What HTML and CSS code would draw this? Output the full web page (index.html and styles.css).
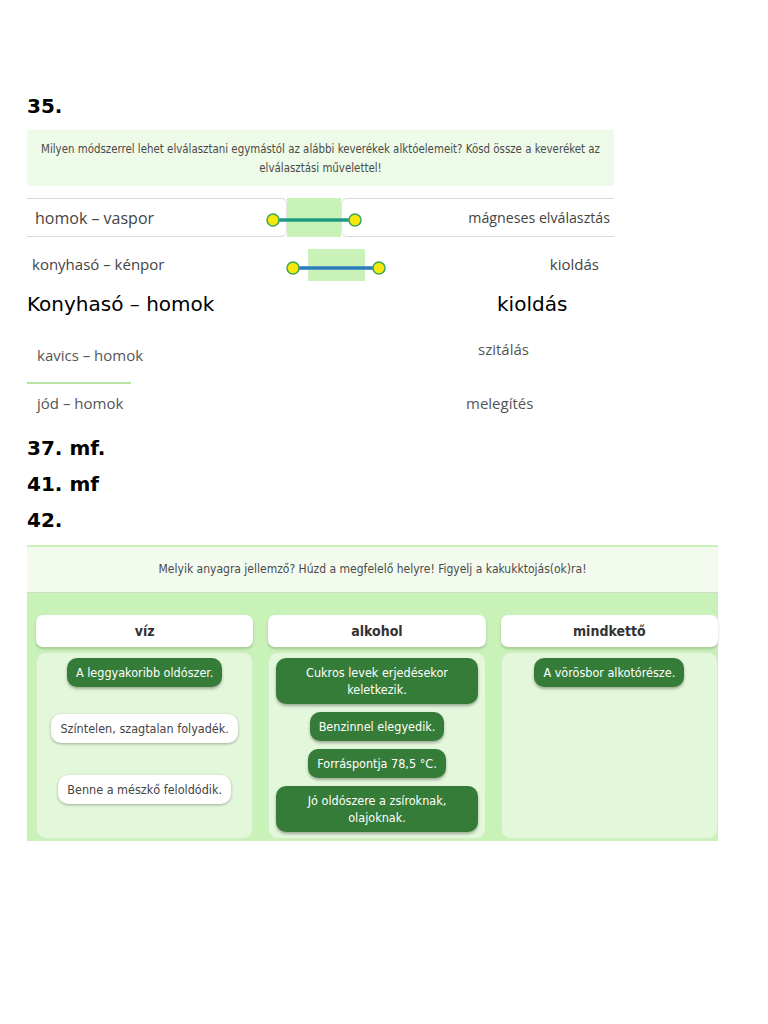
FILE: index.html
```html
<!DOCTYPE html>
<html lang="hu">
<head>
  <meta charset="UTF-8" />
  <meta name="viewport" content="width=device-width, initial-scale=1" />
  <title>Feladatok</title>
  <link rel="stylesheet" href="styles.css">
</head>
<body>
  <div class="page">
    <h2 class="num num-first">35.</h2>

    <div class="match">
      <div class="prompt">Milyen módszerrel lehet elválasztani egymástól az alábbi keverékek alktóelemeit? Kösd össze a keveréket az elválasztási művelettel!</div>

      <div class="pair pair-one">
        <div class="card card-left">homok – vaspor</div>
        <div class="slot"></div>
        <div class="card card-right">mágneses elválasztás</div>
      </div>

      <div class="pair pair-two">
        <div class="pair-label">konyhasó – kénpor</div>
        <div class="slot slot-low"></div>
        <div class="pair-label pair-end">kioldás</div>
      </div>

      <svg class="wires" width="587" height="160" viewBox="0 0 587 160">
        <line x1="246" y1="90" x2="328" y2="90" stroke="#1f9a82" stroke-width="3.5" />
        <circle cx="246" cy="90" r="6" fill="#f6e80c" stroke="#3aa85c" stroke-width="1.5" />
        <circle cx="328" cy="90" r="6" fill="#f6e80c" stroke="#3aa85c" stroke-width="1.5" />
        <line x1="266" y1="138" x2="352" y2="138" stroke="#2b7cbd" stroke-width="3.5" />
        <circle cx="266" cy="138" r="6" fill="#f6e80c" stroke="#3aa85c" stroke-width="1.5" />
        <circle cx="352" cy="138" r="6" fill="#f6e80c" stroke="#3aa85c" stroke-width="1.5" />
      </svg>
    </div>

    <div class="typed">
      <span class="typed-left">Konyhasó – homok</span>
      <span>kioldás</span>
    </div>

    <div class="scrap">
      <div class="scrap-row">
        <span class="scrap-left">kavics – homok</span>
        <span class="scrap-right up">szitálás</span>
      </div>
      <div class="scrap-rule"></div>
      <div class="scrap-row">
        <span class="scrap-left">jód – homok</span>
        <span class="scrap-right back">melegítés</span>
      </div>
    </div>

    <h2 class="num num-gap">37. mf.</h2>
    <h2 class="num">41. mf</h2>
    <h2 class="num">42.</h2>

    <div class="sort">
      <div class="sort-prompt">Melyik anyagra jellemző? Húzd a megfelelő helyre! Figyelj a kakukktojás(ok)ra!</div>
      <div class="sort-board">
        <div class="bin">
          <div class="bin-head">víz</div>
          <div class="bin-body bin-spread">
            <span class="chip">A leggyakoribb oldószer.</span>
            <span class="chip chip-white">Színtelen, szagtalan folyadék.</span>
            <span class="chip chip-white chip-drop">Benne a mészkő feloldódik.</span>
          </div>
        </div>
        <div class="bin">
          <div class="bin-head">alkohol</div>
          <div class="bin-body">
            <span class="chip">Cukros levek erjedésekor keletkezik.</span>
            <span class="chip">Benzinnel elegyedik.</span>
            <span class="chip">Forráspontja 78,5 °C.</span>
            <span class="chip">Jó oldószere a zsíroknak, olajoknak.</span>
          </div>
        </div>
        <div class="bin">
          <div class="bin-head">mindkettő</div>
          <div class="bin-body">
            <span class="chip">A vörösbor alkotórésze.</span>
          </div>
        </div>
      </div>
    </div>
  </div>
</body>
</html>
```

FILE: styles.css
```css
body {
  margin: 0;
  background: #fff;
  font-family: 'DejaVu Sans', sans-serif;
  color: #000;
}
.page {
  padding: 88px 0 0 27px;
}
.num {
  margin: 0;
  font-size: 20px;
  line-height: 36px;
  font-weight: bold;
}
.num-first {
  margin-bottom: 6px;
}
.num-gap {
  margin-top: 15px;
}

/* matching task screenshot */
.match {
  position: relative;
  width: 587px;
  font-family: 'Open Sans', sans-serif;
  color: #444;
}
.prompt {
  height: 56px;
  box-sizing: border-box;
  padding: 10px 2px 0;
  background: #effbe9;
  text-align: center;
  font-family: 'DejaVu Sans Condensed', 'Liberation Sans Narrow', 'Open Sans', sans-serif;
  font-stretch: condensed;
  font-size: 11.4px;
  line-height: 19px;
  color: #4a4a4a;
}
.pair {
  display: flex;
}
.pair-one {
  margin-top: 12px;
  height: 39px;
}
.card {
  flex: 1;
  display: flex;
  align-items: center;
  box-sizing: border-box;
  border-top: 1px solid #d9d9d9;
  border-bottom: 1px solid #d9d9d9;
  background: #fff;
}
.card-left {
  flex: 0 0 260px;
  padding-left: 8px;
  font-size: 16px;
  border-right: 1px solid #e4e4e4;
  border-radius: 0 6px 6px 0;
}
.card-right {
  justify-content: flex-end;
  padding-right: 4px;
  font-size: 14.2px;
  border-left: 1px solid #e4e4e4;
  border-radius: 6px 0 0 6px;
}
.slot {
  flex: 0 0 54px;
  background: #c9f2b8;
}
.pair-two {
  height: 48px;
  font-size: 15px;
}
.pair-label {
  flex: 0 0 281px;
  box-sizing: border-box;
  padding: 17px 0 0 5px;
}
.pair-end {
  flex: 1;
  text-align: right;
  padding: 17px 15px 0 0;
}
.slot-low {
  flex: 0 0 57px;
  height: 32px;
  margin-top: 12px;
}
.wires {
  position: absolute;
  left: 0;
  top: 0;
}

.typed {
  display: flex;
  font-size: 20px;
  line-height: 26px;
  margin-top: 6px;
}
.typed-left {
  width: 470px;
}

.scrap {
  font-family: 'Open Sans', sans-serif;
  font-size: 15px;
  color: #555;
  margin-top: 26px;
  width: 587px;
}
.scrap-row {
  display: flex;
  height: 24px;
  line-height: 24px;
}
.scrap-left {
  width: 439px;
  padding-left: 10px;
}
.up {
  position: relative;
  top: -6px;
  padding-left: 2px;
}
.scrap-rule {
  width: 104px;
  height: 2px;
  background: #b9e4a8;
  margin: 15px 0 7px;
}
.back {
  margin-left: -10px;
}

/* sorting task screenshot */
.sort {
  width: 691px;
  margin-top: 7px;
  font-family: 'DejaVu Sans Condensed', 'Liberation Sans Narrow', 'Open Sans', sans-serif;
  font-stretch: condensed;
  border-top: 2px solid #c9f2b8;
}
.sort-prompt {
  height: 46px;
  box-sizing: border-box;
  padding-top: 15px;
  background: #f3fbef;
  border-bottom: 1px solid #cfdcc8;
  text-align: center;
  font-size: 12px;
  color: #4a4a4a;
}
.sort-board {
  display: grid;
  grid-template-columns: repeat(3, 1fr);
  gap: 15px;
  padding: 22px 0 2px 9px;
  background: #c9f2b8;
}
.bin {
  display: flex;
  flex-direction: column;
  gap: 5px;
}
.bin-head {
  height: 32px;
  line-height: 32px;
  text-align: center;
  background: #fff;
  border-radius: 7px;
  box-shadow: 0 2px 3px rgba(0, 0, 0, 0.18);
  font-size: 14px;
  font-weight: bold;
  color: #333;
}
.bin-body {
  height: 187px;
  box-sizing: border-box;
  padding: 5px 7px;
  display: flex;
  flex-direction: column;
  align-items: center;
  gap: 8px;
  background: #e3f7da;
  border: 1px solid #d3ecc8;
  border-radius: 10px;
}
.bin-spread {
  gap: 27px;
}
.chip {
  max-width: 204px;
  box-sizing: border-box;
  padding: 6px 9px;
  text-align: center;
  font-size: 12.5px;
  line-height: 17px;
  color: #fff;
  background: #367c39;
  border-radius: 10px;
  box-shadow: 0 2px 3px rgba(0, 0, 0, 0.3);
}
.chip-white {
  color: #444;
  background: #fff;
  box-shadow: 0 1px 3px rgba(0, 0, 0, 0.3);
}
.chip-drop {
  margin-top: 5px;
}
```
